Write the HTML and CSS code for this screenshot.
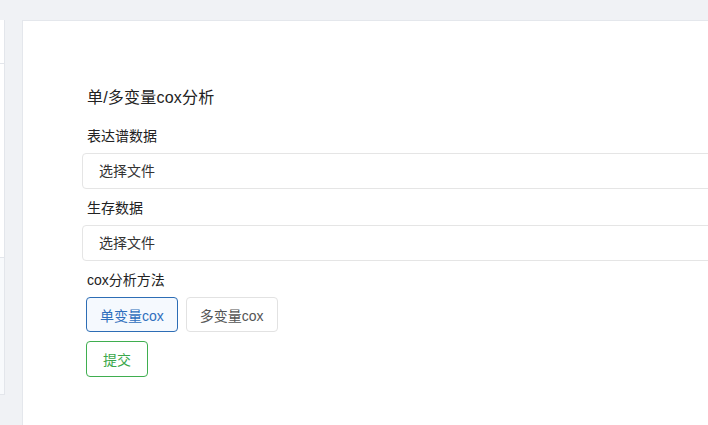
FILE: index.html
```html
<!DOCTYPE html>
<html lang="zh-CN">
<head>
<meta charset="utf-8">
<title>单/多变量cox分析</title>
<link rel="stylesheet" href="styles.css">
</head>
<body>
<div class="page">
  <aside class="side">
    <div class="side-head"></div>
    <div class="side-body"></div>
    <div class="side-foot"></div>
  </aside>
  <main class="card">
    <form class="form">
      <h2 class="title">单/多变量cox分析</h2>
      <label class="label">表达谱数据</label>
      <div class="file">选择文件</div>
      <label class="label">生存数据</label>
      <div class="file">选择文件</div>
      <label class="label">cox分析方法</label>
      <div class="choices">
        <button type="button" class="btn choice active">单变量cox</button>
        <button type="button" class="btn choice">多变量cox</button>
      </div>
      <div class="actions">
        <button type="button" class="btn submit">提交</button>
      </div>
    </form>
  </main>
</div>
</body>
</html>
```
FILE: styles.css
```css
html, body {
  margin: 0;
  padding: 0;
  height: 100%;
  overflow: hidden;
  background: #f0f2f5;
  font-family: "Liberation Sans", "Noto Sans CJK SC", sans-serif;
  color: #333;
}

.page {
  display: flex;
  align-items: flex-start;
  gap: 17px;
  padding-top: 20px;
  width: 1100px;
}

.side {
  width: 4px;
  height: 374px;
  background: #fff;
  border-right: 1px solid #e3e6eb;
  border-bottom: 1px solid #e3e6eb;
  display: flex;
  flex-direction: column;
}

.side-head {
  height: 43px;
  border-bottom: 1px solid #e3e6eb;
}

.side-body {
  height: 193px;
  border-bottom: 1px solid #e3e6eb;
}

.side-foot {
  flex: 1;
  background: #f8fafc;
}

.card {
  flex: 1;
  height: 500px;
  background: #fff;
  border: 1px solid #e4e7ec;
  padding: 67px 0 0 59px;
  box-sizing: border-box;
}

.form {
  display: flex;
  flex-direction: column;
  align-items: flex-start;
}

.title {
  margin: 0 0 18px 5px;
  font-size: 16px;
  line-height: 20px;
  font-weight: normal;
  color: #222;
  letter-spacing: 0.2px;
}

.label {
  display: block;
  margin: 0 0 7px 5px;
  font-size: 14px;
  line-height: 20px;
  color: #222;
}

.file {
  align-self: stretch;
  height: 34px;
  border: 1px solid #e5e5e5;
  border-radius: 4px;
  padding-left: 16px;
  font-size: 14px;
  line-height: 34px;
  color: #333;
  margin-bottom: 9px;
}

.choices {
  display: flex;
  gap: 8px;
  margin-left: 4px;
  margin-bottom: 9px;
}

.actions {
  margin-left: 4px;
}

.btn {
  font-family: inherit;
  font-size: 14px;
  border-radius: 4px;
  background: #fff;
  cursor: pointer;
  box-sizing: border-box;
}

.choice {
  height: 35px;
  padding: 0 13px;
  border: 1px solid #e2e2e2;
  color: #555;
}

.choice.active {
  border-color: #2d6db5;
  color: #2f6fbd;
  background: #f5f9fe;
}

.submit {
  height: 36px;
  padding: 0 16px;
  border: 1px solid #3fae4f;
  color: #3aa84a;
}
```
